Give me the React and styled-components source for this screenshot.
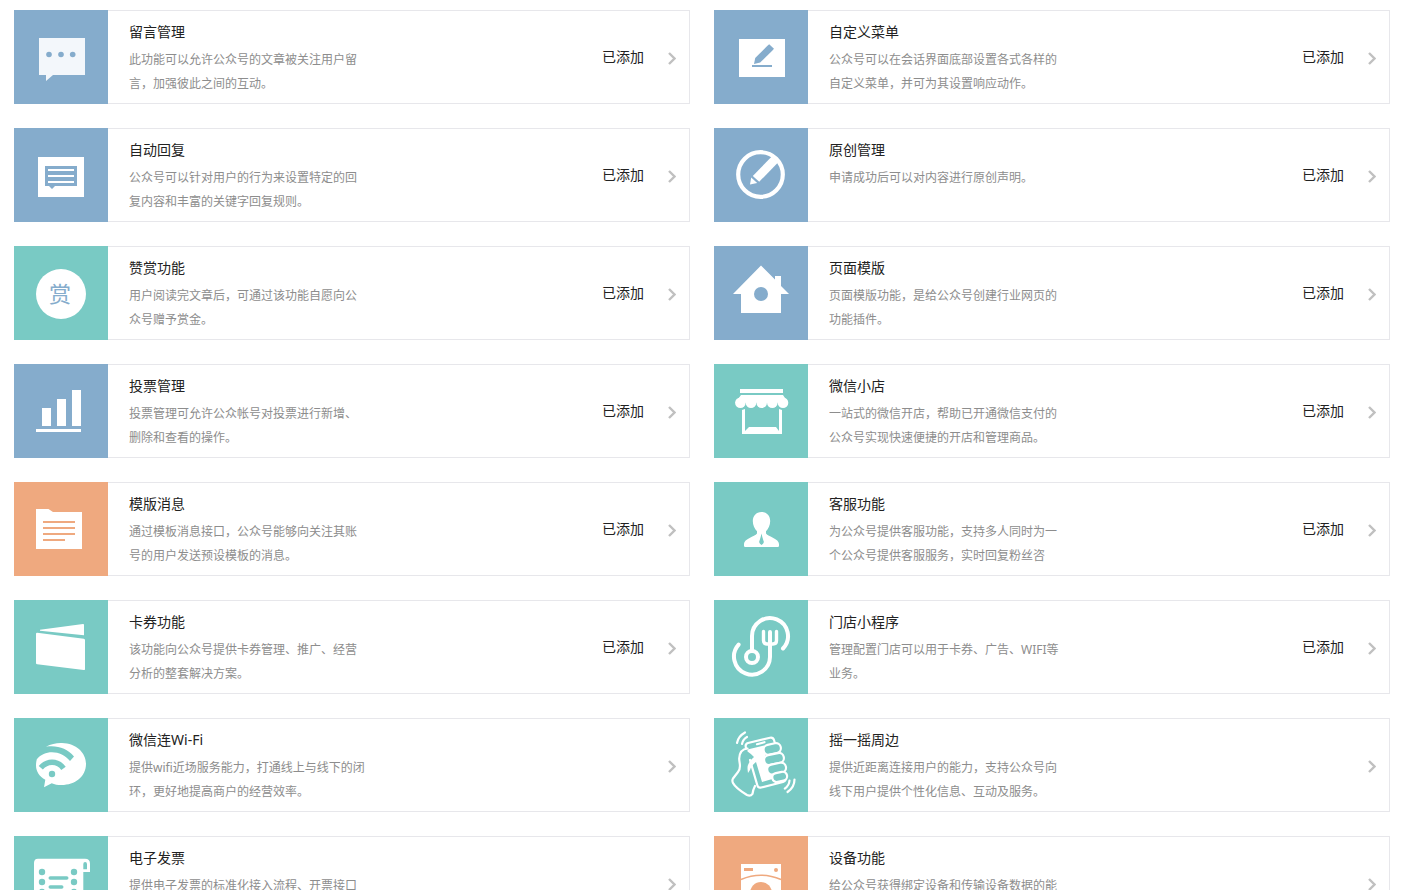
import React from "react";
import styled, { createGlobalStyle } from "styled-components";

const BLUE = "#85accc";
const TEAL = "#79cac4";
const ORANGE = "#efa97f";

const GlobalStyle = createGlobalStyle`
  *, *::before, *::after { box-sizing: border-box; }
  body {
    margin: 0;
    background: #fff;
    color: #222;
    font-family: "Noto Sans", "Noto Sans CJK SC", sans-serif;
    font-size: 14px;
  }
`;

const Page = styled.main`
  height: 100vh;
  overflow: hidden;
  padding: 10px 23px 0 14px;
`;

const PluginList = styled.ul`
  display: grid;
  grid-template-columns: repeat(2, minmax(0, 1fr));
  gap: 24px;
  margin: 0;
  padding: 0;
  list-style: none;
`;

const Card = styled.a`
  display: flex;
  min-height: 94px;
  color: inherit;
  text-decoration: none;
`;

const IconTile = styled.span`
  flex: none;
  width: 94px;
  background: ${(p) => p.$color};
`;

const IconSvg = styled.svg`
  display: block;
  width: 94px;
  height: 94px;
`;

const CardBody = styled.div`
  flex: 1;
  display: flex;
  align-items: center;
  justify-content: space-between;
  padding: 0 13px 0 21px;
  border: 1px solid #e7e7eb;
  border-left: 0;
`;

const Info = styled.div`
  align-self: flex-start;
  width: 238px;
  padding-top: 9px;
`;

const Title = styled.h3`
  margin: 0 0 4px;
  font-size: 14px;
  font-weight: 400;
  line-height: 24px;
`;

const Description = styled.p`
  max-height: 48px;
  margin: 0;
  overflow: hidden;
  color: #8d8d8d;
  font-size: 12px;
  line-height: 24px;
`;

const Meta = styled.div`
  display: flex;
  align-items: center;
  gap: 24px;
`;

const Status = styled.span`
  line-height: 24px;
`;

const Chevron = styled.svg`
  display: block;
  width: 8px;
  height: 16px;
`;

const icons = {
  comment: (
    <g>
      <path fill="#f3f7fb" d="M25 28h46v37H39l-7 6v-6h-7z" />
      <g fill={BLUE}>
        <circle cx="35" cy="44.5" r="2.8" />
        <circle cx="47" cy="44.5" r="2.8" />
        <circle cx="58.7" cy="44.5" r="2.8" />
      </g>
    </g>
  ),
  menu: (
    <g>
      <path d="M25 29h46v38H25z" />
      <g fill={BLUE}>
        <path d="M38 55h20v2H38z" />
        <path d="M40 54l1.2-6 12-12 2-1.800 4.800 4.600-1.800 2L46.2 52.400z" />
      </g>
    </g>
  ),
  reply: (
    <g>
      <path d="M24 29h46v40H24z" />
      <path fill={BLUE} d="M31 38h32v20H41l-3 3-3-3h-4z" />
      <path d="M34 41h26v2H34zM34 47h26v2H34zM34 53h26v2H34z" />
    </g>
  ),
  original: (
    <g>
      <circle cx="46.5" cy="46.5" r="22.3" fill="none" stroke="#fff" strokeWidth="4.2" />
      <path d="M57.5 28.8l6.5 5.7L45.2 53.8l-6.4-5.8z" />
      <path d="M37.2 49.5l6 5.4-7.2 1.6z" />
    </g>
  ),
  reward: (
    <g>
      <circle cx="47" cy="48" r="25" />
      <text x="46" y="56" fill={BLUE} fontSize="22" textAnchor="middle">赏</text>
    </g>
  ),
  vote: <path d="M22 65h45v3H22zM28 44h9v18h-9zM43 35h9v27h-9zM58 26h9v36h-9z" />,
  house: (
    <g>
      <path d="M47 19.6L61 33.6V30h6v10l8 8h-8v19H27V48h-8z" />
      <circle cx="47" cy="48" r="7" fill={BLUE} />
    </g>
  ),
  shop: (
    <g>
      <path d="M26 25h43v4H26zM27 31h42l5.200 7.800h-53z" />
      <circle cx="26.4" cy="38.8" r="5.3" />
      <circle cx="37" cy="38.8" r="5.3" />
      <circle cx="47.7" cy="38.8" r="5.3" />
      <circle cx="58.3" cy="38.8" r="5.3" />
      <circle cx="69" cy="38.8" r="5.3" />
      <path d="M28 46l3-1v22l4-4h27l3 4V45l3 1v24H28z" />
    </g>
  ),
  template: (
    <g>
      <path d="M22 27h12.5l4.5 3h29v37H22z" />
      <path fill={ORANGE} d="M29 39h32v2H29zM29 45h32v2H29zM29 51h32v2H29zM29 57h22v2H29z" />
    </g>
  ),
  service: (
    <g>
      <path d="M47.5 30c5.4 0 8.7 4 8.7 9 0 4.4-1.8 7.600-4.200 10.200v2.200c2.300 3.300 13 5 13 10.600v1.800q0 1.200-1.200 1.200H31.200Q30 65 30 63.800V62c0-5.600 10.700-7.300 13-10.600v-2.200C40.600 46.600 38.800 43.400 38.800 39c0-5 3.300-9 8.700-9z" />
      <path fill={TEAL} d="M47.500 51.500q.5 3 2.400 8.500-.5 1.800-2.400 3-1.900-1.200-2.400-3 1.900-5.500 2.400-8.500z" />
    </g>
  ),
  coupon: (
    <g>
      <path d="M26 29.700L69 24q1-.1 1 .9v10.400L26 30.700z" />
      <path d="M23.200 32.800L69.800 38.700q1.200.2 1.200 1.400v28.800q0 1.300-1.300 1.200L23.200 64.300Q22 64.200 22 63V34q0-1.300 1.200-1.200z" />
    </g>
  ),
  store: (
    <g fill="none" stroke="#fff" strokeWidth="4" strokeLinecap="round">
      <circle cx="38" cy="57" r="6" />
      <path d="M38 50V36a18 18 0 1 1 31 12.500" />
      <path d="M24.600 44.600A18 18 0 1 0 56 57V32" />
      <path d="M49.500 31.500v9q0 3.500 3.500 3.500h6q3.500 0 3.500-3.500v-9" strokeWidth="3.400" />
    </g>
  ),
  wifi: (
    <g>
      <path d="M32 28.700C37 26 42.500 24.800 48 25c14 .4 24 9.500 24 21 0 12.500-11 21-24.500 21-3.600 0-7-.5-9.800-1.800L30 69.300l1.300-7.500C25.500 58.500 22 53.500 22 47.500c0-2 .2-4.200.8-6.300C27 36.500 32 34.300 38 34.300c7 0 13.200 3 18 8.700l4-4.500C53 30.500 43.500 27 32 28.700z" />
      <path fill="none" stroke={TEAL} strokeWidth="5.400" d="M26.800 49.800c3-3.600 6.600-5.600 11.200-5.600s8.800 2.300 11.500 6.200" />
      <circle cx="38" cy="56" r="3.200" fill={TEAL} />
    </g>
  ),
  shake: (
    <g fill="none" stroke="#fff" strokeWidth="2.200" strokeLinecap="round" strokeLinejoin="round">
      <path d="M61 25.500l-1-3.500q-1-3-4-2.300L34 25q-2.800.8-2.300 3.600l.3 1.700M36 42l7.400 25.500q.8 2.700 3.800 2L69 64q3.200-1 2.300-4" />
      <path d="M43 26.200l7.500-2" />
      <path fill="#fff" stroke="none" d="M33.500 31.500L50 27.500l3 5-2 5 2 6 3 8 4 9-12 3.500-6-20q-5 4-6 8l-2 3q-1-6 0-8 2-5 6-8-4-4-6.500-5.500z" />
      <path d="M33.500 30.500c-5 .4-8 4.300-8.300 10-.2 4.500 2.800 9-1.200 13.500l-5 6.500q-1.200 2 0 4.500 2.500 5 14 12 3.500 1.500 5.500-1.200.5-4 2.500-7.800" />
      <g fill={TEAL}>
        <rect x="49.500" y="26" width="17.500" height="10" rx="5" transform="rotate(-12 58 31)" />
        <rect x="50" y="36" width="20" height="10" rx="5" transform="rotate(-12 60 41)" />
        <rect x="53" y="45.500" width="19" height="10" rx="5" transform="rotate(-12 63 50)" />
        <rect x="58" y="54.500" width="15" height="9" rx="4.500" transform="rotate(-12 65 58)" />
      </g>
      <path d="M23 25c.8-4.500 3.500-8 8-10.500M28 26c.6-3 2.200-5.500 5-7" />
      <path d="M80.500 61.500c0 5.500-2.500 9.500-7 12.500M75.500 62.500c-.2 3.500-1.800 6-4.700 8.200" />
    </g>
  ),
  invoice: (
    <g>
      <path d="M24 22.700h47q5 0 5 5V36h-6.700v58H20V27q0-4.300 4-4.300z" />
      <path fill={TEAL} d="M69.300 33.300V28q0-2 1.800-2t1.900 2v5.300z" />
      <g fill={TEAL}>
        <circle cx="28" cy="36" r="3.200" />
        <circle cx="28" cy="46" r="3.200" />
        <circle cx="28" cy="56" r="3.200" />
        <circle cx="60" cy="36" r="3.200" />
        <circle cx="60" cy="46" r="3.200" />
        <circle cx="60" cy="56" r="3.200" />
        <rect x="34.500" y="40.200" width="20" height="3.600" rx="1.800" />
        <rect x="34.500" y="49.200" width="15" height="3.600" rx="1.800" />
      </g>
    </g>
  ),
  device: (
    <g>
      <path d="M27 28h40v46H27z" />
      <path fill={ORANGE} d="M30 32h9v3h-9z" />
      <circle cx="62" cy="34" r="2" fill={ORANGE} />
      <path fill="none" stroke={ORANGE} strokeWidth="1.500" d="M27 43.500q20-8.500 40 0" />
      <circle cx="47" cy="57" r="11" fill={ORANGE} />
    </g>
  ),
};

const plugins = [
  { icon: "comment", color: BLUE, title: "留言管理", text: "此功能可以允许公众号的文章被关注用户留言，加强彼此之间的互动。", added: true },
  { icon: "menu", color: BLUE, title: "自定义菜单", text: "公众号可以在会话界面底部设置各式各样的自定义菜单，并可为其设置响应动作。", added: true },
  { icon: "reply", color: BLUE, title: "自动回复", text: "公众号可以针对用户的行为来设置特定的回复内容和丰富的关键字回复规则。", added: true },
  { icon: "original", color: BLUE, title: "原创管理", text: "申请成功后可以对内容进行原创声明。", added: true },
  { icon: "reward", color: TEAL, title: "赞赏功能", text: "用户阅读完文章后，可通过该功能自愿向公众号赠予赏金。", added: true },
  { icon: "house", color: BLUE, title: "页面模版", text: "页面模版功能，是给公众号创建行业网页的功能插件。", added: true },
  { icon: "vote", color: BLUE, title: "投票管理", text: "投票管理可允许公众帐号对投票进行新增、删除和查看的操作。", added: true },
  { icon: "shop", color: TEAL, title: "微信小店", text: "一站式的微信开店，帮助已开通微信支付的公众号实现快速便捷的开店和管理商品。", added: true },
  { icon: "template", color: ORANGE, title: "模版消息", text: "通过模板消息接口，公众号能够向关注其账号的用户发送预设模板的消息。", added: true },
  { icon: "service", color: TEAL, title: "客服功能", text: "为公众号提供客服功能，支持多人同时为一个公众号提供客服服务，实时回复粉丝咨", added: true },
  { icon: "coupon", color: TEAL, title: "卡券功能", text: "该功能向公众号提供卡券管理、推广、经营分析的整套解决方案。", added: true },
  { icon: "store", color: TEAL, title: "门店小程序", text: "管理配置门店可以用于卡券、广告、WIFI等业务。", added: true },
  { icon: "wifi", color: TEAL, title: "微信连Wi-Fi", text: "提供wifi近场服务能力，打通线上与线下的闭环，更好地提高商户的经营效率。", added: false },
  { icon: "shake", color: TEAL, title: "摇一摇周边", text: "提供近距离连接用户的能力，支持公众号向线下用户提供个性化信息、互动及服务。", added: false },
  { icon: "invoice", color: TEAL, title: "电子发票", text: "提供电子发票的标准化接入流程、开票接口", added: false },
  { icon: "device", color: ORANGE, title: "设备功能", text: "给公众号获得绑定设备和传输设备数据的能", added: false },
];

function PluginCard({ icon, color, title, text, added }) {
  return (
    <li>
      <Card href={`#${icon}`}>
        <IconTile $color={color}>
          <IconSvg viewBox="0 0 94 94" fill="#fff" aria-hidden="true">
            {icons[icon]}
          </IconSvg>
        </IconTile>
        <CardBody>
          <Info>
            <Title>{title}</Title>
            <Description>{text}</Description>
          </Info>
          <Meta>
            {added && <Status>已添加</Status>}
            <Chevron viewBox="0 0 8 16" fill="none" stroke="#c0c0c0" strokeWidth="2.4" aria-hidden="true">
              <path d="M1 4l5.500 5.500L1 15" />
            </Chevron>
          </Meta>
        </CardBody>
      </Card>
    </li>
  );
}

export default function App() {
  return (
    <>
      <GlobalStyle />
      <Page>
        <PluginList>
          {plugins.map((plugin) => (
            <PluginCard key={plugin.icon} {...plugin} />
          ))}
        </PluginList>
      </Page>
    </>
  );
}
